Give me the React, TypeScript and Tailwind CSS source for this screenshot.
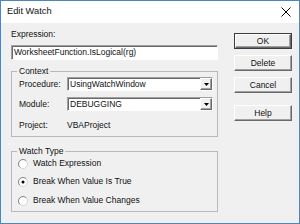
import React from 'react';

const sunken =
  'border-t border-l border-b border-r border-t-[#a0a0a0] border-l-[#a0a0a0] border-b-white border-r-white shadow-[inset_1px_1px_0_#696969]';
const raised =
  'border-t border-l border-b border-r border-t-white border-l-white border-b-[#696969] border-r-[#696969] shadow-[inset_-1px_-1px_0_#a0a0a0]';

function Button({ label, primary }: { label: string; primary?: boolean }) {
  return (
    <div className={`h-[16px] w-[58px] ${primary ? 'border border-[#3c3c3c]' : ''}`}>
      <div className={`flex h-full items-center justify-center bg-[#f0f0f0] ${raised}`}>{label}</div>
    </div>
  );
}

function Combo({ value }: { value: string }) {
  return (
    <div className={`flex h-[14px] flex-1 bg-white ${sunken}`}>
      <div className="flex-1 pl-[2px] leading-[12px]">{value}</div>
      <div className={`flex w-[12px] items-center justify-center bg-[#f0f0f0] ${raised}`}>
        <svg width="5" height="3" viewBox="0 0 5 3">
          <path d="M0 0H5L2.5 3Z" fill="#000" />
        </svg>
      </div>
    </div>
  );
}

function Radio({ label, checked }: { label: string; checked?: boolean }) {
  return (
    <div className="flex h-[13px] items-center gap-[5px] pl-[6px]">
      <svg width="10" height="10" viewBox="0 0 10 10">
        <circle cx="5" cy="5" r="4.5" fill="#fff" stroke="#d4d4d4" />
        <path d="M1.8 8.2 A4.5 4.5 0 0 1 8.2 1.8" fill="none" stroke="#8a8a8a" />
        {checked && <circle cx="5" cy="5" r="1.5" fill="#000" />}
      </svg>
      <span>{label}</span>
    </div>
  );
}

export default function App() {
  return (
    <div className="flex h-[224px] w-[300px] flex-col border border-[#4a86c0] bg-[#f0f0f0] font-['Liberation_Sans',Arial,sans-serif] text-[8.5px] text-[#111]">
      <div className="flex h-[22px] items-center justify-between bg-white pl-[6px] pr-[8px] text-[9.3px]">
        <span>Edit Watch</span>
        <svg width="10" height="10" viewBox="0 0 10 10">
          <path d="M0.5 0.5L9.5 9.5M9.5 0.5L0.5 9.5" stroke="#000" strokeWidth="1" />
        </svg>
      </div>

      <div className="flex flex-1 pl-[10px] pr-[7px] pt-[6px]">
        <div className="flex w-[207px] flex-col">
          <div className="h-[11px] leading-[11px]">Expression:</div>
          <div className={`mt-[5px] h-[15px] bg-white pl-[2px] leading-[13px] ${sunken}`}>
            WorksheetFunction.IsLogical(rg)
          </div>

          <fieldset className="mt-[6px] border border-[#b9b9b9] pb-[5px] pl-[7px] pr-[4px]">
            <legend className="ml-[-2px] px-[2px] leading-[11px]">Context</legend>
            <div className="flex items-center">
              <span className="w-[48px]">Procedure:</span>
              <Combo value="UsingWatchWindow" />
            </div>
            <div className="mt-[6px] flex items-center">
              <span className="w-[48px]">Module:</span>
              <Combo value="DEBUGGING" />
            </div>
            <div className="mt-[9px] flex h-[11px] items-center">
              <span className="w-[48px]">Project:</span>
              <span>VBAProject</span>
            </div>
          </fieldset>

          <fieldset className="mt-[9px] border border-[#b9b9b9] pb-[4px]">
            <legend className="ml-[5px] px-[2px] leading-[11px]">Watch Type</legend>
            <Radio label="Watch Expression" />
            <div className="mt-[5px]">
              <Radio label="Break When Value Is True" checked />
            </div>
            <div className="mt-[6px]">
              <Radio label="Break When Value Changes" />
            </div>
          </fieldset>
        </div>

        <div className="ml-auto flex flex-col pt-[4px]">
          <Button label="OK" primary />
          <div className="mt-[6px]">
            <Button label="Delete" />
          </div>
          <div className="mt-[6px]">
            <Button label="Cancel" />
          </div>
          <div className="mt-[12px]">
            <Button label="Help" />
          </div>
        </div>
      </div>
    </div>
  );
}
